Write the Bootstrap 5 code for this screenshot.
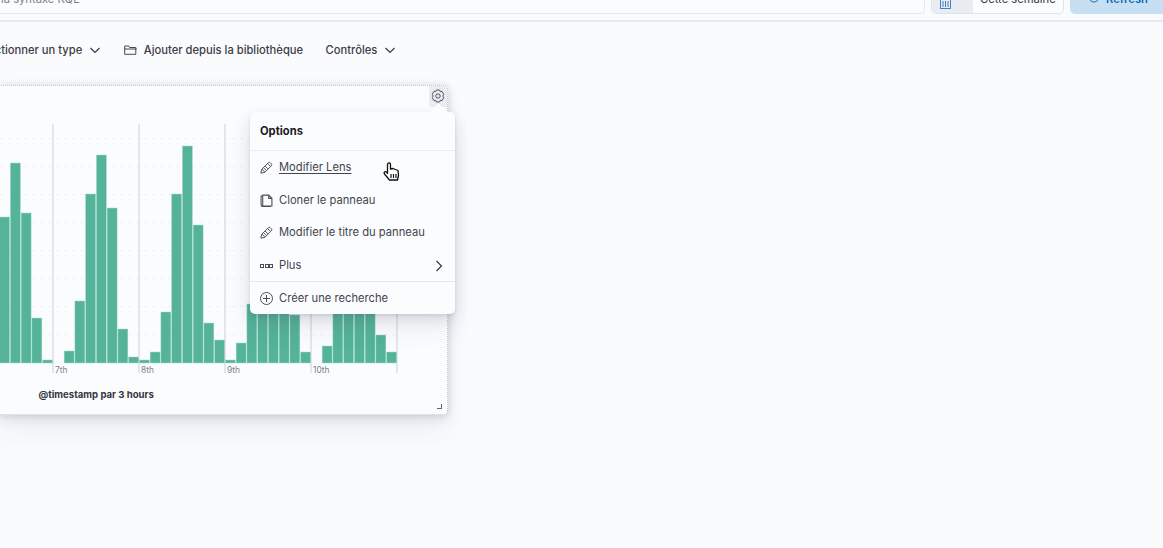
<!DOCTYPE html>
<html lang="fr"><head><meta charset="utf-8">
<link href="https://cdn.jsdelivr.net/npm/bootstrap@5.3.0/dist/css/bootstrap.min.css" rel="stylesheet">
<style>
html,body{height:548px;overflow:hidden}
body{background:#fafbfd;font-family:Inter,"Liberation Sans",sans-serif;color:#343741;font-size:11.2px}
.topzone{height:22px;border-bottom:2px solid #e6e9f2;overflow:hidden;padding-right:0}
.querybox{flex:1;height:14px;margin-top:0;background:#fbfcfd;border:1px solid #e4e8f0;border-top:0;border-left:0;border-radius:0 0 5px 0;position:relative;overflow:hidden}
.querytext{display:block;margin-top:-9px;margin-left:1px;color:#7b808c;line-height:16px;font-size:11.2px}
.dategroup{width:133px;height:14px;margin-left:6px;border:1px solid #dfe3ec;border-top:0;border-radius:0 0 5px 5px;overflow:hidden;background:#fbfcfd}
.dateicon{width:41px;background:#e9edf3;color:#3f7fc2;text-align:center;overflow:hidden}
.datetext{flex:1;margin-top:-9px;line-height:16px;font-size:11.2px;padding-left:7px;white-space:nowrap}
.refreshbtn{width:94px;height:14px;margin-left:6px;margin-right:-1px;background:#c7dff3;border-radius:0 0 0 5px;color:#0a6cb8;font-weight:600;overflow:hidden;padding-left:18px;white-space:nowrap}
.refreshbtn span{line-height:16px;margin-top:-9px;display:block;font-size:11.2px}
.refreshbtn svg{margin-top:-9px;flex:none;margin-right:6px}
.toolstrip{height:56px;margin-left:-28.5px;font-weight:500;color:#3a3d47;white-space:nowrap}
.toolitem{gap:7px;margin-right:22.5px}
.stage{height:330px;width:449px;margin-top:7px;margin-left:-1px;background:#fbfcfe;border:1px dotted #c4c7ce;border-radius:0 4px 4px 0;box-shadow:0 0 6px rgba(50,60,90,.12),0 4px 12px rgba(50,60,90,.13),0 18px 26px rgba(50,60,90,.05);position:relative}
.stagechart{position:absolute;left:0;top:-86px}
.axislabel{font-size:8.4px;fill:#7c808a;font-family:Inter,"Liberation Sans",sans-serif}
.axistitle{font-size:9.6px;font-weight:700;fill:#343741;font-family:Inter,"Liberation Sans",sans-serif}
.gearbtn{position:absolute;left:429px;top:0;width:18px;height:21px;background:#e9ecf1;border-radius:0 4px 0 4px;display:flex;align-items:flex-start;justify-content:center;padding-top:3px}
.resizer{position:absolute;right:5px;bottom:5px;width:5px;height:5px;border-right:1px solid #5f6470;border-bottom:1px solid #5f6470}
.menubox{position:absolute;left:250px;top:112px;width:205px;height:202px;background:#fbfcfe;border-radius:5px;box-shadow:0 2px 3px rgba(50,60,90,.09),0 6px 14px rgba(50,60,90,.12),0 14px 28px rgba(50,60,90,.07);z-index:3}
.menubox::before{content:"";position:absolute;left:181.500px;top:-6.500px;width:13px;height:13px;background:#fbfcfe;transform:rotate(45deg)}
.menutitle{height:39px;font-weight:700;font-size:11.2px;color:#1a1c21;padding-left:10px;border-bottom:1px solid #e9ecf2;position:relative}
.menurow{height:32.7px;padding-left:10px;gap:6px;color:#41454f;position:relative}
.menurow svg{flex:none}
.menulast{border-top:1px solid #e4e7ee;height:34px;margin-top:-1px}
.menurow u{text-underline-offset:2px}
.morearrow{position:absolute;right:12px;top:11px}
.handcursor{position:absolute;left:383px;top:162px;z-index:5}
</style></head><body>
<div class="d-flex topzone">
  <div class="querybox"><span class="querytext">la syntaxe KQL</span></div>
  <div class="d-flex dategroup">
    <div class="dateicon"><svg width="12" height="12" viewBox="0 0 12 12" class="d-block" style="margin:-2px 0 0 8px"><rect x=".5" y=".5" width="10" height="10" fill="none" stroke="#3f7fc2"/><path d="M3 3v6M5.500 3v6M8 3v6" stroke="#3f7fc2"/></svg></div>
    <div class="datetext">Cette semaine</div>
  </div>
  <div class="d-flex refreshbtn"><svg width="12" height="12" viewBox="0 0 12 12"><circle cx="6" cy="6" r="5" fill="none" stroke="#0a6cb8"/></svg><span>Refresh</span></div>
</div>
<div class="d-flex align-items-center toolstrip">
  <div class="d-flex align-items-center toolitem"><span>Sélectionner un type</span><svg width="12" height="12" viewBox="0 0 12 12"><path d="M1.500 4l4.500 4.500L10.500 4" fill="none" stroke="#343741" stroke-width="1.100"/></svg></div>
  <div class="d-flex align-items-center toolitem"><svg width="13" height="12" viewBox="0 0 13 12"><path d="M.7 10.300V2h4l1 1.500h6.100v6.800zM.7 5h12" fill="none" stroke="#343741" stroke-width=".9"/></svg><span>Ajouter depuis la bibliothèque</span></div>
  <div class="d-flex align-items-center toolitem"><span>Contrôles</span><svg width="12" height="12" viewBox="0 0 12 12"><path d="M1.500 4l4.500 4.500L10.500 4" fill="none" stroke="#343741" stroke-width="1.100"/></svg></div>
</div>
<div class="stage">
  <svg class="stagechart" width="448" height="414" viewBox="0 0 448 414" id="chartsvg"></svg>
  <div class="gearbtn"><svg width="14" height="14" viewBox="0 0 16 16" fill="none" stroke="#4a4e58" stroke-width="1.100"><path d="M6.100 1.200h3.800l.8 1.900 2-.3 1.900 3.300-1.200 1.900 1.200 1.900-1.900 3.300-2-.3-.8 1.900H6.100l-.8-1.900-2 .3-1.900-3.300L2.600 8 1.400 6.100l1.900-3.300 2 .3z"/><circle cx="8" cy="8" r="2.500"/></svg></div>
  <div class="resizer"></div>
</div>
<div class="menubox">
  <div class="d-flex align-items-center menutitle">Options</div>
  <div class="d-flex align-items-center menurow"><svg width="13" height="13" viewBox="0 0 12 12" fill="none" stroke="#4a4e58" stroke-width=".9"><path d="M.8 11.200l.7-3.400 6.200-6.200q.9-.9 1.800 0l1 1q.9.9 0 1.800L4.300 10.600zM1.800 7.500l2.700 2.700M3.200 6.100l2.700 2.700M4.700 4.600l2.700 2.700M7 2.300l2.700 2.700"/></svg><u>Modifier Lens</u></div>
  <div class="d-flex align-items-center menurow"><svg width="13" height="13" viewBox="0 0 12 12" fill="none" stroke="#4a4e58"><path d="M2.500 1h5.500l3 3v7H2.500zM8 1v3h3M2.500 1.800H1V10q0 1.500 1.500 1.500H10"/></svg>Cloner le panneau</div>
  <div class="d-flex align-items-center menurow"><svg width="13" height="13" viewBox="0 0 12 12" fill="none" stroke="#4a4e58" stroke-width=".9"><path d="M.8 11.200l.7-3.400 6.200-6.200q.9-.9 1.800 0l1 1q.9.9 0 1.800L4.300 10.600zM1.800 7.500l2.700 2.700M3.200 6.100l2.700 2.700M4.700 4.600l2.700 2.700M7 2.300l2.700 2.700"/></svg>Modifier le titre du panneau</div>
  <div class="d-flex align-items-center menurow"><svg width="13" height="13" viewBox="0 0 13 13" fill="none" stroke="#4a4e58" shape-rendering="crispEdges"><path d="M.5 5.500h3v2.500h-3zM5 5.500h3v2.500H5zM9.500 5.500h3v2.500h-3z"/></svg>Plus<svg class="morearrow" width="8" height="12" viewBox="0 0 8 12" fill="none" stroke="#343741" stroke-width="1.200"><path d="M1.500 1l5 5-5 5"/></svg></div>
  <div class="d-flex align-items-center menurow menulast"><svg width="13" height="13" viewBox="0 0 13 13" fill="none" stroke="#4a4e58"><circle cx="6.500" cy="6.500" r="6"/><path d="M6.500 3v7M3 6.500h7"/></svg>Créer une recherche</div>
</div>
<svg class="handcursor" width="17" height="20" viewBox="0 0 17 20"><path d="M4.500 2.500c0-2 3-2 3 0V7l2.500-.5 2.500 1 2.500 1 .5 5-1 4.500H6.500L1.500 12c-1-1.500.5-3 2-2l1 1.500z" fill="#fff" stroke="#111" stroke-width="1.300" stroke-linejoin="round"/><path d="M8 12v4M10.500 12v4M13 12v4" stroke="#111" stroke-width="1.200"/></svg>
<script>
var s=document.getElementById('chartsvg'),h='';
var bars=[[-5,217],[-4,163],[-3,213],[-2,318],[-1,360],[1,351],[2,301],[3,194],[4,155],[5,208],[6,329],[7,357],[8,360],[9,352],[10,312],[11,194],[12,146],[13,225],[14,323],[15,340],[16,360],[17,343],[18,304],[19,304],[20,304],[21,304],[22,315],[23,352],[25,346],[26,304],[27,304],[28,304],[29,304],[30,335],[31,352]];
[138.500,166.500,194.500,222.500,250.500,278.500,306.500,334.500].forEach(function(y){h+='<line x1="0" x2="397" y1="'+y+'" y2="'+y+'" stroke="#f0f2f6" stroke-dasharray="4 4"/>'});
[53,139,225,311,397].forEach(function(x){h+='<line x1="'+x+'" x2="'+x+'" y1="124" y2="373" stroke="#cdd0d5"/>'});
bars.forEach(function(b){var x=53+b[0]*10.75;h+='<rect x="'+(x+.4)+'" y="'+b[1]+'" width="9.950" height="'+(363-b[1])+'" fill="#54b399" stroke="#a3dccb" stroke-width=".5"/>'});
[['7th',55],['8th',141],['9th',227],['10th',313]].forEach(function(t){h+='<text class="axislabel" x="'+t[1]+'" y="373">'+t[0]+'</text>'});
h+='<text class="axistitle" x="38.500" y="398">@timestamp par 3 hours</text>';
s.innerHTML=h;
</script>
<script src="https://cdn.jsdelivr.net/npm/bootstrap@5.3.0/dist/js/bootstrap.bundle.min.js"></script>
</body></html>
